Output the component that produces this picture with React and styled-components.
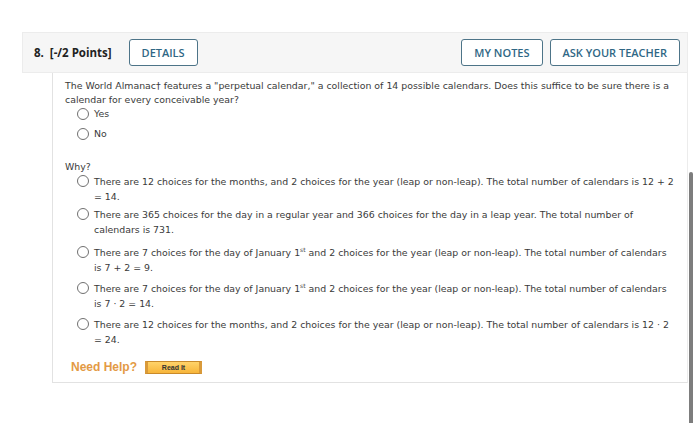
import React from 'react';
import styled, { createGlobalStyle } from 'styled-components';

const Global = createGlobalStyle`
  html, body {
    margin: 0;
    padding: 0;
    background: #fff;
  }
`;

const Page = styled.div`
  position: relative;
  width: 700px;
  height: 423px;
  overflow: hidden;
  padding: 32px 12px 0 22px;
  box-sizing: border-box;
`;

const Header = styled.div`
  display: flex;
  align-items: center;
  height: 41px;
  background: #f6f6f6;
  border: 1px solid #ececec;
  box-sizing: border-box;
  padding: 0 7px 0 11px;
  font-family: 'Open Sans', 'DejaVu Sans', sans-serif;
`;

const Points = styled.div`
  font-size: 11.5px;
  font-weight: 700;
  color: #222;
  margin-right: 17px;
`;

const Button = styled.div`
  height: 27px;
  display: flex;
  align-items: center;
  padding: 0 ${p => p.$pad || 12}px;
  border: 1px solid #4d7488;
  border-radius: 3px;
  color: #2f6785;
  font-size: 11px;
  font-weight: 600;
  box-sizing: border-box;
  background: #fff;
  margin-left: ${p => p.$gap || 0}px;
`;

const Spacer = styled.div`
  flex: 1;
`;

const Card = styled.div`
  margin-left: 30px;
  border-left: 1px solid #e2e2e2;
  border-right: 1px solid #ececec;
  border-bottom: 1px solid #e2e2e2;
  padding: 6px 13px 0 12px;
  height: 310px;
  box-sizing: border-box;
  font-family: 'DejaVu Sans', Verdana, sans-serif;
  font-size: 9.4px;
  color: #3a3a3a;
`;

const Para = styled.div`
  line-height: 14px;
  margin-bottom: ${p => p.$mb || 0}px;
`;

const Choice = styled.div`
  display: flex;
  align-items: flex-start;
  margin-left: 12px;
  line-height: ${p => p.$lh || 15}px;
  padding-top: ${p => (p.$sup ? 3 : 0)}px;
  margin-bottom: ${p => p.$mb || 0}px;
`;

const Radio = styled.span`
  flex: none;
  width: 10px;
  height: 10px;
  border: 1px solid #707070;
  border-radius: 50%;
  margin: 1px 5px 0 0;
  background: #fff;
`;

const Label = styled.span`
  flex: 1;
`;

const Sup = styled.sup`
  font-size: 6px;
  line-height: 0;
`;

const Help = styled.div`
  display: flex;
  align-items: center;
  margin: 13px 0 0 6px;
`;

const HelpText = styled.span`
  font-family: 'Liberation Sans', Arial, sans-serif;
  font-weight: 700;
  font-size: 12px;
  color: #e39a45;
  margin-right: 8px;
`;

const ReadIt = styled.span`
  width: 57px;
  height: 13px;
  display: flex;
  align-items: center;
  justify-content: center;
  box-sizing: border-box;
  border: 1px solid #c98a2a;
  border-left: 3px solid #d99a3a;
  border-right: 3px solid #d99a3a;
  background: linear-gradient(#ffd36a, #f7b53a);
  font-family: 'Liberation Sans', Arial, sans-serif;
  font-weight: 700;
  font-size: 7px;
  color: #333;
`;

const Scrollbar = styled.div`
  position: absolute;
  left: 689px;
  top: 172px;
  width: 4px;
  height: 260px;
  border-radius: 2px;
  background: #7d7d7d;
`;

const options = [
  { sup: false, mb: 3, text: <>There are 12 choices for the months, and 2 choices for the year (leap or non-leap). The total number of calendars is 12 + 2 = 14.</> },
  { sup: false, mb: 5, text: <>There are 365 choices for the day in a regular year and 366 choices for the day in a leap year. The total number of calendars is 731.</> },
  { sup: true, mb: 3, text: <>There are 7 choices for the day of January 1<Sup>st</Sup> and 2 choices for the year (leap or non-leap). The total number of calendars is 7 + 2 = 9.</> },
  { sup: true, mb: 6, text: <>There are 7 choices for the day of January 1<Sup>st</Sup> and 2 choices for the year (leap or non-leap). The total number of calendars is 7 · 2 = 14.</> },
  { sup: false, mb: 0, text: <>There are 12 choices for the months, and 2 choices for the year (leap or non-leap). The total number of calendars is 12 · 2 = 24.</> },
];

export default function App() {
  return (
    <Page>
      <Global />
      <Header>
        <Points>8.&nbsp; [-/2 Points]</Points>
        <Button>DETAILS</Button>
        <Spacer />
        <Button>MY NOTES</Button>
        <Button $gap={7}>ASK YOUR TEACHER</Button>
      </Header>
      <Card>
        <Para>
          The World Almanac† features a "perpetual calendar," a collection of 14 possible calendars. Does this suffice to be sure there is a calendar for every conceivable year?
        </Para>
        <Choice $lh={14} $mb={6}><Radio /><Label>Yes</Label></Choice>
        <Choice $lh={14} $mb={19}><Radio /><Label>No</Label></Choice>
        <Para>Why?</Para>
        {options.map((o, i) => (
          <Choice key={i} $sup={o.sup} $mb={o.mb}><Radio /><Label>{o.text}</Label></Choice>
        ))}
        <Help>
          <HelpText>Need Help?</HelpText>
          <ReadIt>Read It</ReadIt>
        </Help>
      </Card>
      <Scrollbar />
    </Page>
  );
}
